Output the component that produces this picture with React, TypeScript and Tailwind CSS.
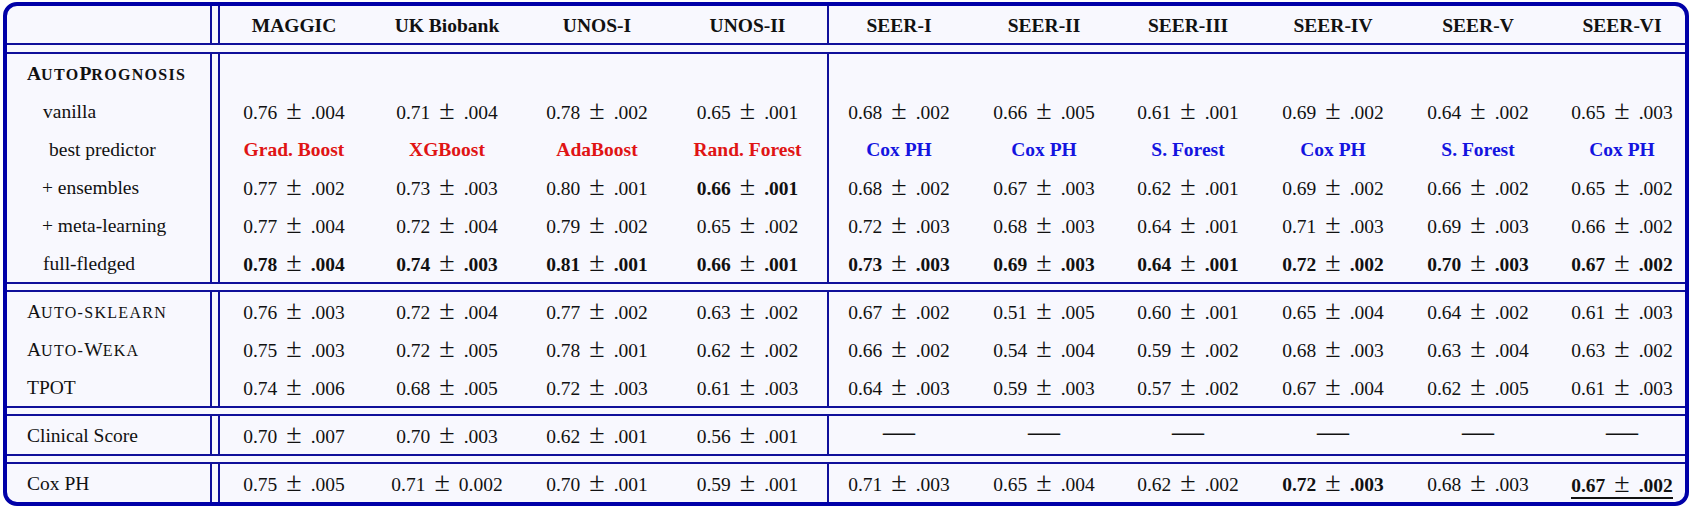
const leftW = ["w-[148px]", "w-[158px]", "w-[142px]", "w-[159px]"];
const rightW = ["w-[140px]", "w-[150px]", "w-[138px]", "w-[152px]", "w-[138px]", "w-[136px] pl-[14px]"];

const headers = ["MAGGIC", "UK Biobank", "UNOS-I", "UNOS-II", "SEER-I", "SEER-II", "SEER-III", "SEER-IV", "SEER-V", "SEER-VI"];

// small caps drawn by hand: capitals at full size, the rest smaller
function SmallCaps({ parts }: { parts: string[] }) {
  return (
    <span className="whitespace-nowrap">
      {parts.map((p, i) =>
        i % 2 === 0 ? <span key={i}>{p}</span> : <span key={i} className="text-[16px] tracking-[1.3px]">{p}</span>
      )}
    </span>
  );
}

// "0.76 .004" plain, "*..." bold, "_..." bold + underline, "-" dash, "r:..." red, "b:..." blue
const autoRows = [
  { label: <span className="font-bold"><SmallCaps parts={["A", "UTO", "P", "ROGNOSIS"]} /></span>, cls: "pl-[20px]", values: [] as string[] },
  { label: "vanilla", cls: "pl-[36px]", values: ["0.76 .004", "0.71 .004", "0.78 .002", "0.65 .001", "0.68 .002", "0.66 .005", "0.61 .001", "0.69 .002", "0.64 .002", "0.65 .003"] },
  { label: "best predictor", cls: "pl-[42px]", values: ["r:Grad. Boost", "r:XGBoost", "r:AdaBoost", "r:Rand. Forest", "b:Cox PH", "b:Cox PH", "b:S. Forest", "b:Cox PH", "b:S. Forest", "b:Cox PH"] },
  { label: "+ ensembles", cls: "pl-[35px]", values: ["0.77 .002", "0.73 .003", "0.80 .001", "*0.66 .001", "0.68 .002", "0.67 .003", "0.62 .001", "0.69 .002", "0.66 .002", "0.65 .002"] },
  { label: "+ meta-learning", cls: "pl-[35px]", values: ["0.77 .004", "0.72 .004", "0.79 .002", "0.65 .002", "0.72 .003", "0.68 .003", "0.64 .001", "0.71 .003", "0.69 .003", "0.66 .002"] },
  { label: "full-fledged", cls: "pl-[36px]", values: ["*0.78 .004", "*0.74 .003", "*0.81 .001", "*0.66 .001", "*0.73 .003", "*0.69 .003", "*0.64 .001", "*0.72 .002", "*0.70 .003", "*0.67 .002"] },
];

const otherRows = [
  { label: <SmallCaps parts={["A", "UTO-SKLEARN"]} />, cls: "pl-[20px]", values: ["0.76 .003", "0.72 .004", "0.77 .002", "0.63 .002", "0.67 .002", "0.51 .005", "0.60 .001", "0.65 .004", "0.64 .002", "0.61 .003"] },
  { label: <SmallCaps parts={["A", "UTO-", "W", "EKA"]} />, cls: "pl-[20px]", values: ["0.75 .003", "0.72 .005", "0.78 .001", "0.62 .002", "0.66 .002", "0.54 .004", "0.59 .002", "0.68 .003", "0.63 .004", "0.63 .002"] },
  { label: "TPOT", cls: "pl-[20px]", values: ["0.74 .006", "0.68 .005", "0.72 .003", "0.61 .003", "0.64 .003", "0.59 .003", "0.57 .002", "0.67 .004", "0.62 .005", "0.61 .003"] },
];

const clinical = { label: "Clinical Score", cls: "pl-[20px]", values: ["0.70 .007", "0.70 .003", "0.62 .001", "0.56 .001", "-", "-", "-", "-", "-", "-"] };
const coxph = { label: "Cox PH", cls: "pl-[20px]", values: ["0.75 .005", "0.71 0.002", "0.70 .001", "0.59 .001", "0.71 .003", "0.65 .004", "0.62 .002", "*0.72 .003", "0.68 .003", "_0.67 .002"] };

function Value({ v }: { v: string }) {
  if (v === "-") return <span className="mb-[10px] text-[32px] leading-none">—</span>;
  if (v.startsWith("r:")) return <span className="font-bold text-[#e01414]">{v.slice(2)}</span>;
  if (v.startsWith("b:")) return <span className="font-bold text-[#1414e0]">{v.slice(2)}</span>;
  let s = v;
  let cls = "";
  if (s.startsWith("*")) {
    s = s.slice(1);
    cls = "font-bold";
  } else if (s.startsWith("_")) {
    s = s.slice(1);
    cls = "font-bold inline-block border-b-2 border-[#111] leading-[20px]";
  }
  const [a, b] = s.split(" ");
  return (
    <span className={`whitespace-nowrap ${cls}`}>
      {a}
      <span className="mx-[9px] text-[28px] font-normal leading-none">±</span>
      {b}
    </span>
  );
}

type RowProps = { label: React.ReactNode; cls: string; values: string[]; header?: boolean };

function Row({ label, cls, values, header }: RowProps) {
  return (
    <div className={`flex ${header ? "h-[37px]" : "h-[38px]"}`}>
      <div className={`flex w-[205px] shrink-0 items-center border-r-2 border-[#10109a] pt-[2px] ${cls}`}>{label}</div>
      <div className="w-[6px] shrink-0" />
      <div className="flex shrink-0 border-x-2 border-[#10109a]">
        {leftW.map((w, i) => (
          <div key={i} className={`${w} flex shrink-0 items-center justify-center ${header ? "pt-[3px] font-bold" : "pt-[2px]"}`}>
            {header ? headers[i] : values[i] ? <Value v={values[i]} /> : null}
          </div>
        ))}
      </div>
      <div className="flex shrink-0">
        {rightW.map((w, i) => (
          <div key={i} className={`${w} flex shrink-0 items-center justify-center ${header ? "pt-[3px] font-bold" : "pt-[2px]"}`}>
            {header ? headers[i + 4] : values[i + 4] ? <Value v={values[i + 4]} /> : null}
          </div>
        ))}
      </div>
    </div>
  );
}

function DoubleRule({ gap }: { gap: string }) {
  return (
    <div>
      <div className="h-[2px] bg-[#10109a]" />
      <div className={gap} />
      <div className="h-[2px] bg-[#10109a]" />
    </div>
  );
}

export default function App() {
  return (
    <div className="min-h-screen bg-white pt-[2px] pl-[3px]">
      <div className="w-[1686px] overflow-hidden rounded-[14px] border-4 border-[#0000a8] bg-[#f8f8fe] font-['Liberation_Serif',serif] text-[19.5px] text-[#111]">
        <Row label="" cls="" values={[]} header />
        <DoubleRule gap="h-[7px]" />
        {autoRows.map((r, i) => (
          <Row key={i} {...r} />
        ))}
        <DoubleRule gap="h-[6px]" />
        {otherRows.map((r, i) => (
          <Row key={i} {...r} />
        ))}
        <DoubleRule gap="h-[6px]" />
        <Row {...clinical} />
        <DoubleRule gap="h-[6px]" />
        <Row {...coxph} />
      </div>
    </div>
  );
}
